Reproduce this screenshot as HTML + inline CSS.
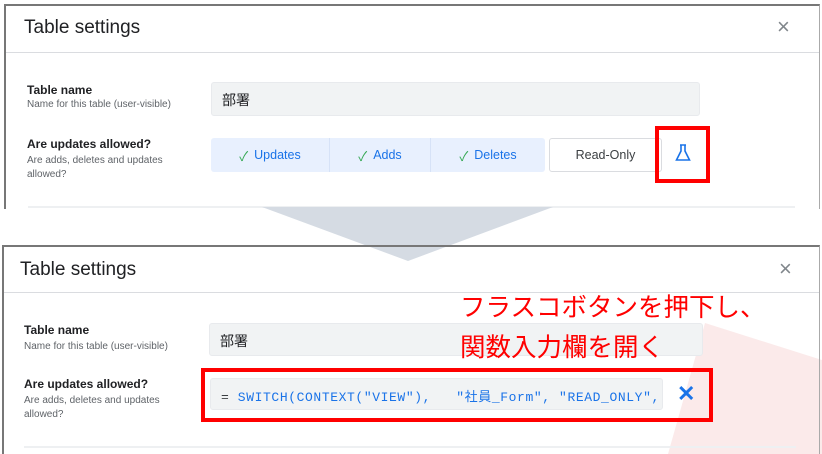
<!DOCTYPE html>
<html><head><meta charset="utf-8"><style>
*{margin:0;padding:0;box-sizing:border-box}
body{width:822px;height:454px;background:#fff;position:relative;overflow:hidden;font-family:"Liberation Sans","Noto Sans CJK JP",sans-serif;color:#202124}
.a{position:absolute}
.title{font-size:19px;color:#202124}
.lbl{font-size:12px;font-weight:bold;color:#202124}
.sub{font-size:10px;color:#5f6368;line-height:14px}
.inp{background:#f1f3f4;border:1px solid #e8eaed;border-radius:3px}
.btn{position:absolute;top:138px;height:34px;font-size:12.5px;display:flex;align-items:center;justify-content:center;color:#1a73e8;background:#e8f0fe;border-right:1px solid #d6e2f7}
.btn b{color:#34a853;font-weight:normal;margin-right:6px;font-size:13px}
</style></head><body>
<div class="a" style="left:4px;top:4px;width:816px;height:205px;border-top:2px solid #777;border-left:2px solid #777;border-right:1px solid #aaa;"></div>
<div class="a title" style="left:24px;top:17px">Table settings</div>
<div class="a" style="left:777px;top:14px;font-size:22px;color:#80868b">×</div>
<div class="a" style="left:6px;top:52px;width:813px;height:1px;background:#dadce0"></div>
<div class="a lbl" style="left:27px;top:83px">Table name</div>
<div class="a sub" style="left:27px;top:98px">Name for this table (user-visible)</div>
<div class="a inp" style="left:211px;top:82px;width:489px;height:34px"></div>
<div class="a" style="left:222px;top:90px;font-size:14px">部署</div>
<div class="a lbl" style="left:27px;top:137px">Are updates allowed?</div>
<div class="a sub" style="left:27px;top:154px;width:150px">Are adds, deletes and updates allowed?</div>
<div class="btn" style="left:211px;width:119px;border-radius:3px 0 0 3px"><b>✓</b>Updates</div>
<div class="btn" style="left:330px;width:101px"><b>✓</b>Adds</div>
<div class="btn" style="left:431px;width:114px;border-right:none;border-radius:0 3px 3px 0"><b>✓</b>Deletes</div>
<div class="btn" style="left:549px;width:113px;background:#fff;border:1px solid #dadce0;border-radius:3px;color:#3c4043">Read-Only</div>
<svg class="a" style="left:674px;top:143px" width="18" height="20" viewBox="0 0 18 20"><path d="M6 2h6M7 2v6L2.5 17h13L11 8V2" fill="none" stroke="#1a73e8" stroke-width="1.6"/></svg>
<div class="a" style="left:655px;top:126px;width:55px;height:57px;border:4px solid #f00"></div>
<div class="a" style="left:28px;top:206px;width:767px;height:2px;background:#eef0f2"></div>
<svg class="a" style="left:0;top:0" width="822" height="454"><polygon points="262,207 553,207 408,261" fill="#d5dbe3"/><polygon points="705,323 822,360 822,454 668,454" fill="#f9e3e3" opacity="0.75"/></svg>
<div class="a" style="left:2px;top:245px;width:818px;height:209px;border-top:2px solid #777;border-left:2px solid #777;border-right:1px solid #aaa;"></div>
<div class="a title" style="left:20px;top:259px">Table settings</div>
<div class="a" style="left:779px;top:256px;font-size:22px;color:#80868b">×</div>
<div class="a" style="left:4px;top:292px;width:815px;height:1px;background:#dadce0"></div>
<div class="a lbl" style="left:24px;top:323px">Table name</div>
<div class="a sub" style="left:24px;top:340px">Name for this table (user-visible)</div>
<div class="a inp" style="left:209px;top:323px;width:494px;height:33px"></div>
<div class="a" style="left:220px;top:331px;font-size:14px">部署</div>
<div class="a lbl" style="left:24px;top:377px">Are updates allowed?</div>
<div class="a sub" style="left:24px;top:394px;width:150px">Are adds, deletes and updates allowed?</div>
<div class="a inp" style="left:210px;top:378px;width:453px;height:32px"></div>
<div class="a" style="left:221px;top:386px;font-size:13px;letter-spacing:0.6px;font-family:'Liberation Mono','Noto Sans CJK JP',monospace;color:#1a73e8;white-space:pre"><span style="color:#3c4043">=</span> SWITCH(CONTEXT("VIEW"),   "社員_Form", "READ_ONLY",</div>
<div class="a" style="left:677px;top:381px;font-size:22px;font-weight:bold;color:#1a73e8">✕</div>
<div class="a" style="left:201px;top:368px;width:512px;height:54px;border:4px solid #f00"></div>
<div class="a" style="left:24px;top:446px;width:772px;height:2px;background:#eef0f2"></div>
<div class="a" style="left:460px;top:286px;font-size:25.5px;color:#ff0000;line-height:40px;white-space:nowrap;font-family:'Noto Sans CJK JP',sans-serif">フラスコボタンを押下し、<br>関数入力欄を開く</div>
</body></html>
